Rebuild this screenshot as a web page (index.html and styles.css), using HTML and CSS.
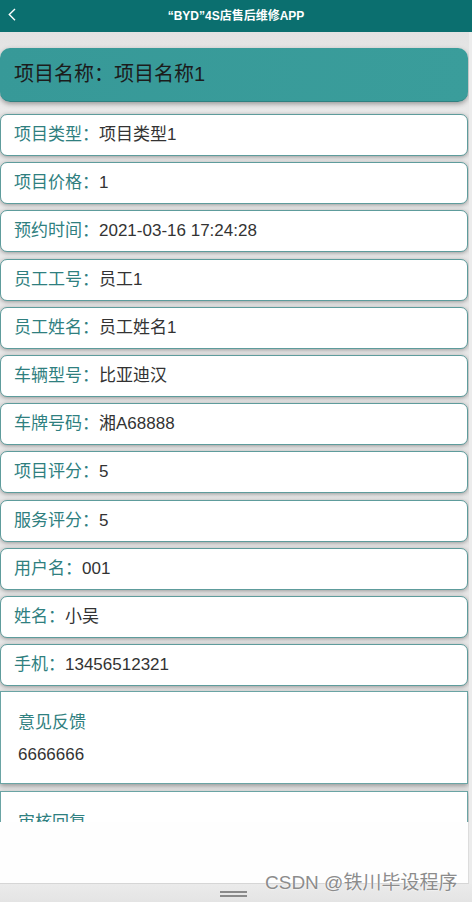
FILE: index.html
```html
<!DOCTYPE html>
<html lang="zh">
<head>
<meta charset="utf-8">
<title>“BYD”4S店售后维修APP</title>
<link rel="stylesheet" href="styles.css">
</head>
<body>
<div class="app">
  <header class="header">
    <svg class="back" width="24" height="32" viewBox="0 0 24 32"><polyline points="15,9 9.3,14.6 15,20.2" fill="none" stroke="#fff" stroke-width="1.4"/></svg>
    <div class="title">“BYD”4S店售后维修APP</div>
    <div class="spacer"></div>
  </header>
  <div class="screen">
    <div class="content">
      <div class="scroll">
        <div class="name-card">项目名称：项目名称1</div>
        <div class="row"><span class="label">项目类型：</span><span class="value">项目类型1</span></div>
        <div class="row"><span class="label">项目价格：</span><span class="value">1</span></div>
        <div class="row"><span class="label">预约时间：</span><span class="value">2021-03-16 17:24:28</span></div>
        <div class="row"><span class="label">员工工号：</span><span class="value">员工1</span></div>
        <div class="row"><span class="label">员工姓名：</span><span class="value">员工姓名1</span></div>
        <div class="row"><span class="label">车辆型号：</span><span class="value">比亚迪汉</span></div>
        <div class="row"><span class="label">车牌号码：</span><span class="value">湘A68888</span></div>
        <div class="row"><span class="label">项目评分：</span><span class="value">5</span></div>
        <div class="row"><span class="label">服务评分：</span><span class="value">5</span></div>
        <div class="row"><span class="label">用户名：</span><span class="value">001</span></div>
        <div class="row"><span class="label">姓名：</span><span class="value">小吴</span></div>
        <div class="row"><span class="label">手机：</span><span class="value">13456512321</span></div>
        <div class="block first">
          <div class="block-label">意见反馈</div>
          <div class="block-value">6666666</div>
        </div>
        <div class="block">
          <div class="block-label">审核回复</div>
          <div class="block-value"></div>
        </div>
      </div>
      <div class="footer-white"></div>
    </div>
    <div class="scrollbar"></div>
  </div>
  <div class="bottom-bar"><div class="handle"></div></div>
  <div class="watermark">CSDN @铁川毕设程序</div>
</div>
</body>
</html>
```
FILE: styles.css
```css
html, body {
  margin: 0;
  padding: 0;
}
body {
  width: 472px;
  height: 902px;
  overflow: hidden;
  font-family: "Liberation Sans", "Noto Sans CJK SC", sans-serif;
  background: #e8e8e8;
}
.app {
  position: relative;
  display: flex;
  flex-direction: column;
  height: 902px;
}
.header {
  height: 32px;
  flex: none;
  background: #0b6f6f;
  display: grid;
  grid-template-columns: 24px 1fr 24px;
  align-items: center;
}
.back {
  display: block;
}
.title {
  text-align: center;
  color: #fff;
  font-weight: bold;
  font-size: 12px;
  line-height: 32px;
}
.screen {
  display: flex;
  height: 852px;
  flex: none;
}
.content {
  width: 469px;
  display: flex;
  flex-direction: column;
}
.scrollbar {
  flex: 1;
  background: #ececec;
}
.scroll {
  height: 790px;
  overflow: hidden;
  padding-top: 16px;
  box-sizing: border-box;
  background: linear-gradient(#e2e2e2, #e9e9e9 40px, #e6e6e6);
}
.name-card {
  height: 54px;
  box-sizing: border-box;
  margin: 0 1px 12px 0;
  background: linear-gradient(100deg, #379998, #3a9d9b);
  border-radius: 10px;
  padding-left: 14px;
  font-size: 20px;
  line-height: 52px;
  color: #1c1c1c;
  box-shadow: 0 2px 5px rgba(0, 0, 0, 0.35);
  border-bottom: 1px solid #2f8080;
}
.row {
  height: 42px;
  box-sizing: border-box;
  margin: 0 1px 6.2px 0;
  background: #fff;
  border: 1px solid #5e9c9c;
  border-radius: 7px;
  padding-left: 13px;
  font-size: 17px;
  line-height: 40px;
  white-space: nowrap;
  box-shadow: 0 1px 4px rgba(0, 0, 0, 0.35);
}
.label {
  color: #2f7f7f;
}
.value {
  color: #333;
}
.block {
  height: 93px;
  box-sizing: border-box;
  margin: 7px 1px 0 0;
  background: #fff;
  border: 1px solid #6aa4a4;
  padding: 19px 17px 0;
  box-shadow: 0 2px 5px rgba(0, 0, 0, 0.35);
}
.block.first {
  margin-top: -1px;
}
.block-label {
  font-size: 17px;
  line-height: 24px;
  color: #2f8080;
}
.block-value {
  margin-top: 8px;
  font-size: 17px;
  line-height: 24px;
  color: #333;
}
.footer-white {
  flex: 1;
  background: #fefefe;
  border-right: 1px solid #dcdcdc;
  border-bottom: 1px solid #d6d6d6;
}
.bottom-bar {
  flex: 1;
  background: linear-gradient(#ebebeb, #e4e4e4);
  display: flex;
  justify-content: center;
  padding-top: 7px;
  box-sizing: border-box;
}
.handle {
  width: 27px;
  height: 2px;
  margin-left: -6px;
  border-top: 2px solid #8a8a8a;
  border-bottom: 2px solid #8a8a8a;
}
.watermark {
  position: absolute;
  left: 265px;
  top: 871px;
  font-size: 19px;
  line-height: 24px;
  color: #8c8c8c;
  text-shadow: 0 0 2px #fff, 0 0 1px #fff;
  white-space: nowrap;
}
```
